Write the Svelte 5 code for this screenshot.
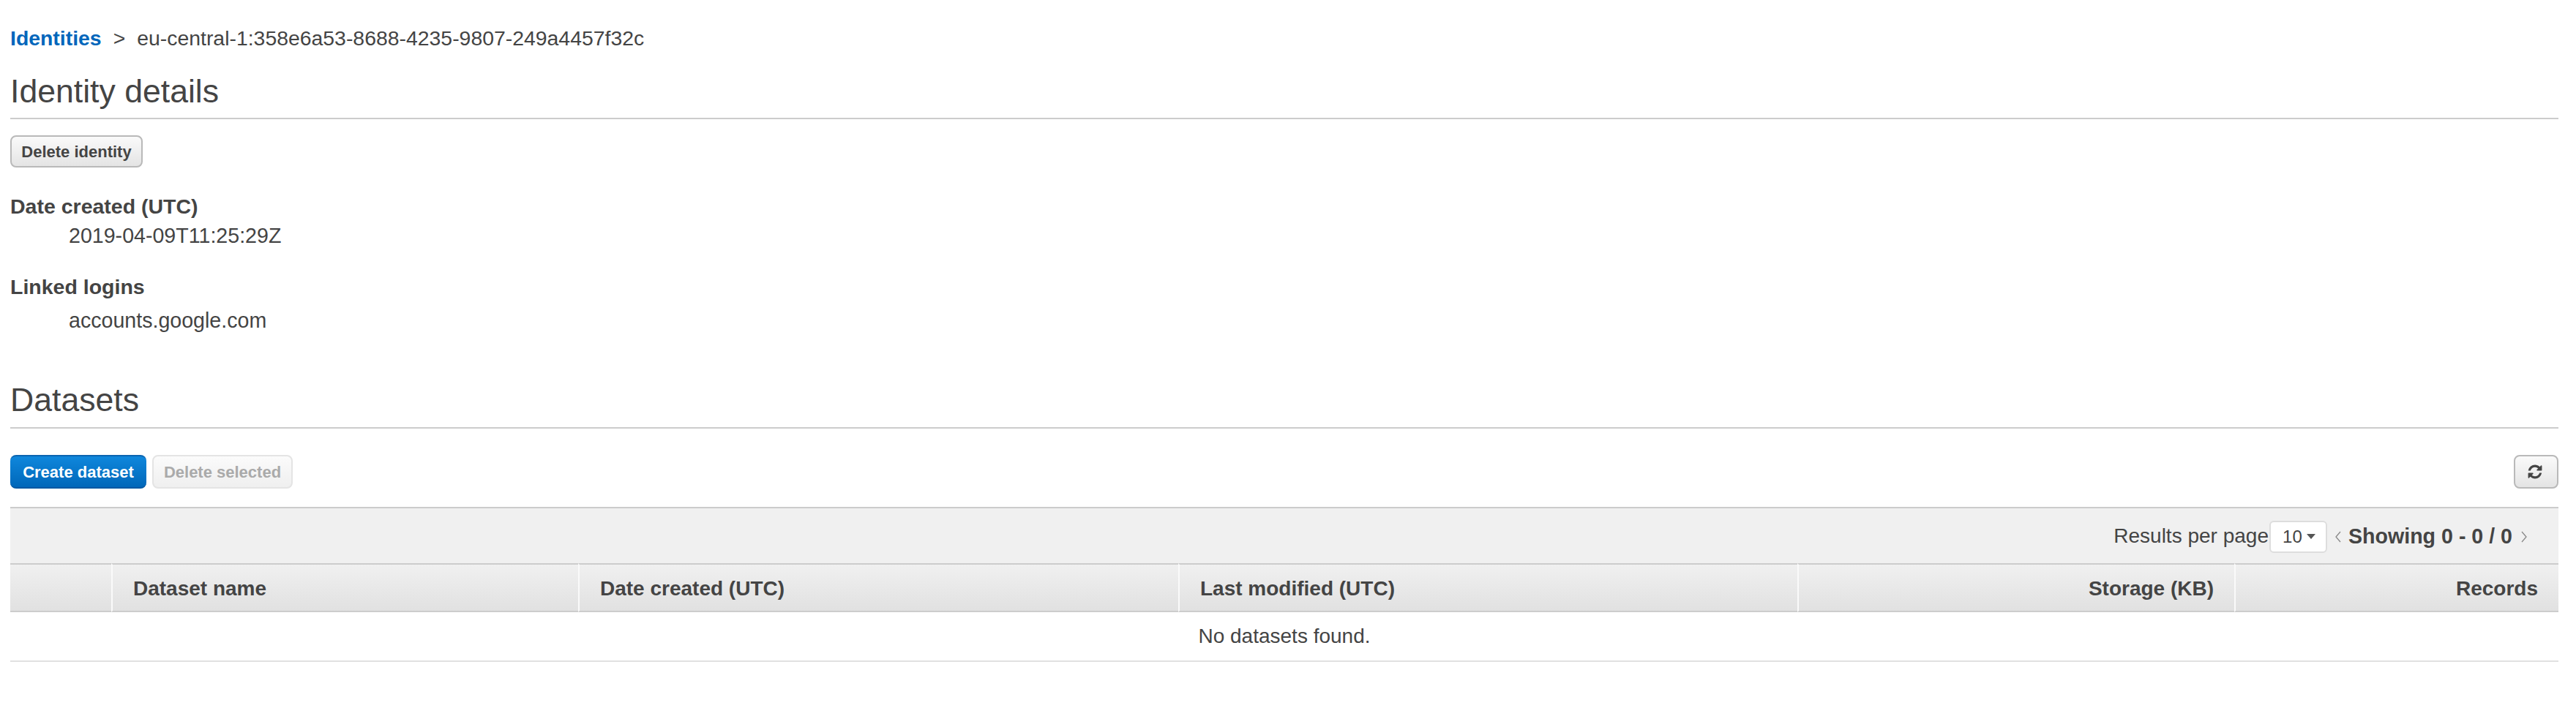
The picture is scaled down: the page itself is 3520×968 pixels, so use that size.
<script lang="ts">
	const columns = [
		{ label: '', width: 138 },
		{ label: 'Dataset name', width: 638 },
		{ label: 'Date created (UTC)', width: 820 },
		{ label: 'Last modified (UTC)', width: 846 },
		{ label: 'Storage (KB)', width: 597, right: true },
		{ label: 'Records', width: 443, right: true }
	];
</script>

<div class="page">
	<nav class="crumbs">
		<a href="#identities">Identities</a>
		<span class="sep">&gt;</span>
		<span>eu-central-1:358e6a53-8688-4235-9807-249a4457f32c</span>
	</nav>

	<h2 class="first">Identity details</h2>
	<button class="btn delete-identity">Delete identity</button>

	<dl>
		<dt>Date created (UTC)</dt>
		<dd>2019-04-09T11:25:29Z</dd>
		<dt class="second">Linked logins</dt>
		<dd class="logins">accounts.google.com</dd>
	</dl>

	<h2 class="datasets">Datasets</h2>

	<div class="actions">
		<button class="btn primary">Create dataset</button>
		<button class="btn disabled">Delete selected</button>
		<button class="btn refresh" aria-label="Refresh">
			<svg viewBox="0 0 1792 1792" width="22" height="22" fill="#444">
				<path d="M1639 1056q0 5-1 7-64 268-268 434.5t-478 166.5q-146 0-282.5-55t-243.5-157l-129 129q-19 19-45 19t-45-19-19-45v-448q0-26 19-45t45-19h448q26 0 45 19t19 45-19 45l-137 137q71 66 161 102t187 36q134 0 250-65t186-179q11-17 53-117 8-23 30-23h192q13 0 22.5 9.5t9.5 22.5zm25-800v448q0 26-19 45t-45 19h-448q-26 0-45-19t-19-45 19-45l138-138q-148-137-349-137-134 0-250 65t-186 179q-11 17-53 117-8 23-30 23h-199q-13 0-22.5-9.5t-9.5-22.5v-7q65-268 270-434.5t480-166.5q146 0 284 55.5t245 156.5l130-129q19-19 45-19t45 19 19 45z" />
			</svg>
		</button>
	</div>

	<div class="pager">
		<span class="per-page">Results per page</span>
		<span class="select">10<i class="caret"></i></span>
		<svg class="chev prev" viewBox="0 0 8 16" width="8" height="16"><path d="M7 1 1 8l6 7" /></svg>
		<strong>Showing 0 - 0 / 0</strong>
		<svg class="chev next" viewBox="0 0 8 16" width="8" height="16"><path d="M1 1l6 7-6 7" /></svg>
	</div>

	<table>
		<thead>
			<tr>
				{#each columns as col}
					<th class:right={col.right} style="width: {col.width}px">{col.label}</th>
				{/each}
			</tr>
		</thead>
		<tbody>
			<tr>
				<td colspan={columns.length}>No datasets found.</td>
			</tr>
		</tbody>
	</table>
</div>

<style>
	:global(body) {
		margin: 0;
		background: #fff;
	}

	.page {
		padding: 0 24px 0 14px;
		height: 968px;
		box-sizing: border-box;
		font-family: 'Liberation Sans', Arial, sans-serif;
		font-size: 28px;
		line-height: 40px;
		color: #444;
	}

	.crumbs {
		padding-top: 32px;
		display: flex;
		height: 40px;
		font-size: 28.4px;
	}

	.crumbs a {
		color: #0066bb;
		font-weight: 700;
		text-decoration: none;
	}

	.sep {
		margin: 0 16px;
	}

	h2 {
		margin: 0;
		font-size: 44.6px;
		font-weight: 400;
		line-height: 48px;
		padding: 2px 0 12px;
		border-bottom: 2px solid #ccc;
	}

	.first {
		margin-top: 27px;
	}

	.btn {
		font-family: inherit;
		font-size: 22px;
		font-weight: 700;
		line-height: 28px;
		color: #444;
		box-sizing: border-box;
		height: 45px;
		padding: 2px 0 0;
		white-space: nowrap;
		border: 2px solid #b9b9b9;
		border-radius: 8px;
		background: linear-gradient(#fafafa, #e4e4e4);
	}

	.delete-identity {
		display: block;
		margin-top: 22px;
		width: 181px;
		height: 44px;
	}

	dl {
		margin: 33px 0 0;
	}

	dt {
		font-weight: 700;
		font-size: 28.5px;
		line-height: 40px;
	}

	dd {
		margin: 0 0 0 80px;
		font-size: 28.6px;
		line-height: 40px;
	}

	.second {
		margin-top: 30px;
	}

	.logins {
		padding-top: 6px;
	}

	.datasets {
		margin-top: 63px;
		padding-bottom: 13px;
	}

	.actions {
		display: flex;
		gap: 8px;
		margin-top: 36px;
	}

	.primary {
		width: 186px;
		height: 46px;
		color: #fff;
		border: 0;
		border-top: 2px solid #0a64b0;
		border-bottom: 2px solid #0058a3;
		background: linear-gradient(#0f87dc, #0067b9);
	}

	.disabled {
		width: 192px;
		height: 46px;
		color: #aaa;
		border-color: #e4e4e4;
		background: linear-gradient(#fbfbfb, #efefef);
	}

	.refresh {
		margin-left: auto;
		width: 61px;
		height: 46px;
		padding: 0 3px 0 0;
		display: flex;
		align-items: center;
		justify-content: center;
	}

	.pager {
		margin-top: 25px;
		box-sizing: border-box;
		height: 77px;
		border-top: 2px solid #ccc;
		background: #f0f0f0;
		display: flex;
		align-items: center;
		justify-content: flex-end;
		padding: 0 43px 0 0;
	}

	.pager strong {
		font-size: 28.6px;
	}

	.select {
		box-sizing: border-box;
		width: 79px;
		height: 44px;
		margin: 2px 0 0 1px;
		border: 2px solid #ddd;
		border-radius: 6px;
		background: #fff;
		font-size: 24px;
		display: flex;
		align-items: center;
		justify-content: center;
		gap: 6px;
		padding-left: 2px;
	}

	.caret {
		width: 0;
		height: 0;
		border-left: 6px solid transparent;
		border-right: 6px solid transparent;
		border-top: 7px solid #555;
	}

	.chev {
		fill: none;
		stroke: #888;
		stroke-width: 1.3;
		margin-top: 3px;
	}

	.prev {
		margin: 3px 10px 0 11px;
	}

	.next {
		margin-left: 12px;
	}

	table {
		width: 3482px;
		border-collapse: separate;
		border-spacing: 0;
		table-layout: fixed;
	}

	th {
		box-sizing: border-box;
		height: 67px;
		padding: 2px 28px 0;
		text-align: left;
		font-weight: 700;
		border-top: 2px solid #ccc;
		border-bottom: 2px solid #ccc;
		border-left: 2px solid #fafafa;
		background: linear-gradient(#f0f0f0, #e1e1e1);
	}

	th:first-child {
		border-left: 0;
	}

	th.right {
		text-align: right;
	}

	td {
		height: 66px;
		padding: 0;
		text-align: center;
		border-bottom: 2px solid #e1e1e1;
	}
</style>
